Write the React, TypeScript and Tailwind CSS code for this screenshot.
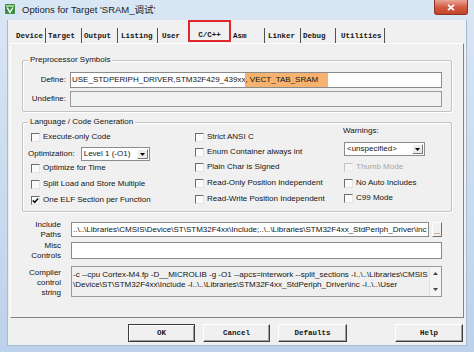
import type { ReactNode } from 'react';

const ui = "font-['Liberation_Sans',Arial,sans-serif] text-[8px] leading-[10px] text-[#141414]";
const dlg = "font-['Liberation_Mono','Courier_New',monospace] text-[7.5px] font-bold leading-[10px] text-[#141414]";

function Check({ checked = false, disabled = false }: { checked?: boolean; disabled?: boolean }) {
  return (
    <span
      className={
        disabled
          ? 'flex h-[9px] w-[9px] shrink-0 border border-t-[#c4c4c4] border-l-[#c4c4c4] border-r-[#ececec] border-b-[#ececec] bg-[#f4f4f4]'
          : 'flex h-[9px] w-[9px] shrink-0 items-center justify-center border border-t-[#6e6e6e] border-l-[#6e6e6e] border-r-[#e4e4e4] border-b-[#e4e4e4] bg-[#fbfbfb]'
      }
    >
      {checked && (
        <svg width="7" height="7" viewBox="0 0 7 7">
          <path d="M0.8 3.4 L2.7 5.3 L6.2 1.4" fill="none" stroke="#111" strokeWidth="1.5" />
        </svg>
      )}
    </span>
  );
}

function Option({
  label,
  checked,
  disabled,
  className = '',
}: {
  label: string;
  checked?: boolean;
  disabled?: boolean;
  className?: string;
}) {
  return (
    <div className={`flex h-[14px] items-center gap-[3px] ${className}`}>
      <Check checked={checked} disabled={disabled} />
      <span className={disabled ? 'text-[#a6a6a6]' : ''}>{label}</span>
    </div>
  );
}

function Dropdown({ value, className = '' }: { value: string; className?: string }) {
  return (
    <div className={`flex h-[14px] items-stretch border border-[#8c8c8c] bg-white ${className}`}>
      <span className="flex flex-1 items-center pl-[2px]">{value}</span>
      <span className="m-[1px] flex w-[11px] items-center justify-center border border-t-white border-l-white border-r-[#7a7a7a] border-b-[#7a7a7a] bg-[#ececec]">
        <svg width="5" height="3" viewBox="0 0 5 3">
          <path d="M0 0H5L2.5 3Z" fill="#000" />
        </svg>
      </span>
    </div>
  );
}

function Group({ title, className = '', children }: { title: string; className?: string; children: ReactNode }) {
  return (
    <div className={`relative rounded-[2px] border border-[#c3c3c3] shadow-[inset_1px_1px_0_#fff,1px_1px_0_#fff] ${className}`}>
      <span className="absolute left-[5px] top-[-6px] bg-[#f0f0f0] px-[2px]">{title}</span>
      {children}
    </div>
  );
}

function Btn({ children, className = '', main = false }: { children: ReactNode; className?: string; main?: boolean }) {
  return (
    <div
      className={`flex h-[18px] items-center justify-center bg-[#f0f0f0] ${dlg} ${
        main
          ? 'border border-[#3c3c3c] shadow-[inset_1px_1px_0_#fff,inset_-1px_-1px_0_#9a9a9a]'
          : 'border border-t-white border-l-white border-r-[#404040] border-b-[#404040] shadow-[inset_-1px_-1px_0_#a0a0a0]'
      } ${className}`}
    >
      {children}
    </div>
  );
}

const tabs = [
  { label: 'Device', cls: 'w-[34px] pl-[4px] border-r' },
  { label: 'Target', cls: 'w-[36px] pl-[2px] border-r' },
  { label: 'Output', cls: 'w-[36px] pl-[2px] border-r' },
  { label: 'Listing', cls: 'w-[40px] pl-[3px] border-r' },
  { label: 'User', cls: 'w-[30px] pl-[4px]' },
];
const tabsAfter = [
  { label: 'Asm', cls: 'w-[34px] pl-[2px] border-r' },
  { label: 'Linker', cls: 'w-[36px] pl-[3px] border-r' },
  { label: 'Debug', cls: 'w-[35px] pl-[2px] border-r' },
  { label: 'Utilities', cls: 'w-[49px] pl-[5px] border-r' },
];

export default function App() {
  return (
    <div className="flex h-[352px] w-[474px] flex-col overflow-hidden bg-linear-to-b from-[#d9e6f4] to-[#bcd2ea] pb-[6px]">
      {/* title bar */}
      <div className="flex h-[20px] shrink-0 items-start">
        <svg className="ml-[5px] mt-[4px]" width="10" height="10" viewBox="0 0 10 10">
          <rect x="0" y="0" width="10" height="10" rx="1" fill="#3b8d3f" />
          <rect x="1" y="1" width="8" height="2" fill="#9fd09a" />
          <path d="M2.2 3.6 L5 8.4 L7.8 3.6" fill="none" stroke="#fff" strokeWidth="1.4" />
        </svg>
        <span className="ml-[7px] mt-[4px] font-['Liberation_Sans','Noto_Sans_CJK_SC',sans-serif] text-[9.5px] leading-[12px] text-[#1c1c1c]">
          Options for Target 'SRAM_调试'
        </span>
        <div className="ml-auto mr-[6px] flex h-[15px] w-[34px] items-center justify-center rounded-b-[3px] border border-t-0 border-[#8e3324] bg-linear-to-b from-[#e8a595] via-[#d35b43] to-[#c2442b]">
          <svg width="8" height="7" viewBox="0 0 8 7">
            <path d="M1 0.8 L7 6.2 M7 0.8 L1 6.2" stroke="#fff" strokeWidth="1.8" />
          </svg>
        </div>
      </div>

      {/* client */}
      <div className={`mx-[7px] flex flex-1 flex-col border-x border-b border-[#a6bad3] bg-[#f0f0f0] ${ui}`}>
        {/* tabs */}
        <div className="flex h-[23px] shrink-0 pl-[4px]">
          {tabs.map((t) => (
            <div key={t.label} className={`flex h-[15px] items-center self-end border-[#505050] ${dlg} ${t.cls}`}>
              {t.label}
            </div>
          ))}
          <div className={`flex h-[22px] w-[43px] items-center justify-center border-2 border-[#e0282c] pt-[7px] ${dlg}`}>
            C/C++
          </div>
          {tabsAfter.map((t) => (
            <div key={t.label} className={`flex h-[15px] items-center self-end border-[#505050] ${dlg} ${t.cls}`}>
              {t.label}
            </div>
          ))}
        </div>

        {/* panel */}
        <div className="mx-[2px] flex h-[275px] shrink-0 flex-col border border-t-white border-l-white border-r-[#838383] border-b-[#838383]">
          <Group title="Preprocessor Symbols" className="ml-[11px] mt-[16px] w-[430px] pb-[4px] pt-[11px]">
            <div className="flex h-[16px] pr-[9px]">
              <span className="flex w-[43px] items-center justify-end">Define:</span>
              <div className="ml-[4px] flex flex-1 items-stretch overflow-hidden whitespace-nowrap border border-[#8a8a8a] bg-white pl-[1px]">
                <span className="flex items-center">USE_STDPERIPH_DRIVER,STM32F429_439xx</span>
                <span className="flex items-center bg-[#f6b36f] pr-[10px]">, VECT_TAB_SRAM</span>
              </div>
            </div>
            <div className="mt-[3px] flex h-[16px] pr-[9px]">
              <span className="flex w-[43px] items-center justify-end">Undefine:</span>
              <div className="ml-[4px] flex-1 border border-[#9a9a9a] bg-[#f2f2f2]" />
            </div>
          </Group>

          <Group title="Language / Code Generation" className="ml-[11px] mt-[10px] flex h-[90px] w-[430px]">
            <div className="flex w-[172px] flex-col pl-[5px] pt-[7px]">
              <Option label="Execute-only Code" className="pl-[3px]" />
              <div className="mt-[3px] flex h-[14px] items-center">
                <span>Optimization:</span>
                <Dropdown value="Level 1 (-O1)" className="ml-[6px] w-[69px]" />
              </div>
              <Option label="Optimize for Time" className="pl-[3px]" />
              <Option label="Split Load and Store Multiple" className="mt-[2px] pl-[3px]" />
              <Option label="One ELF Section per Function" checked className="mt-[2px] pl-[3px]" />
            </div>
            <div className="flex w-[148px] flex-col pt-[7px]">
              <Option label="Strict ANSI C" />
              <Option label="Enum Container always int" className="mt-[1px]" />
              <Option label="Plain Char is Signed" className="mt-[1px]" />
              <Option label="Read-Only Position Independent" className="mt-[2px]" />
              <Option label="Read-Write Position Independent" className="mt-[2px]" />
            </div>
            <div className="flex flex-1 flex-col pt-[2px]">
              <span className="flex h-[12px] items-center">Warnings:</span>
              <Dropdown value="<unspecified>" className="ml-[1px] mt-[5px] w-[81px]" />
              <Option label="Thumb Mode" disabled className="ml-[1px] mt-[4px]" />
              <Option label="No Auto Includes" className="ml-[1px] mt-[2px]" />
              <Option label="C99 Mode" className="ml-[1px] mt-[1px]" />
            </div>
          </Group>

          <div className="mt-[8px] flex pr-[21px]">
            <div className="w-[50px] text-right">
              Include
              <br />
              Paths
            </div>
            <div className="ml-[10px] mt-[2px] flex h-[15px] flex-1 gap-[3px]">
              <div className="flex flex-1 items-center overflow-hidden whitespace-nowrap border border-[#8a8a8a] bg-white pl-[1px]">
                ..\..\Libraries\CMSIS\Device\ST\STM32F4xx\Include;..\..\Libraries\STM32F4xx_StdPeriph_Driver\inc
              </div>
              <div className="flex w-[10px] items-end justify-center border border-t-white border-l-white border-r-[#707070] border-b-[#707070] bg-[#f0f0f0] text-[7px] leading-[9px]">
                ...
              </div>
            </div>
          </div>

          <div className="mt-[1px] flex pr-[21px]">
            <div className="w-[50px] text-right">
              Misc
              <br />
              Controls
            </div>
            <div className="ml-[10px] mt-[1px] h-[17px] flex-1 border border-[#8a8a8a] bg-white" />
          </div>

          <div className="mt-[5px] flex pr-[21px]">
            <div className="mt-[2px] w-[50px] text-right">
              Compiler
              <br />
              control
              <br />
              string
            </div>
            <div className="ml-[10px] flex h-[31px] flex-1 border border-[#9a9a9a] bg-[#f0f0f0]">
              <div className="flex-1 overflow-hidden whitespace-nowrap pl-[1px] pt-[3px]">
                <div>-c --cpu Cortex-M4.fp -D__MICROLIB -g -O1 --apcs=interwork --split_sections -I..\..\Libraries\CMSIS</div>
                <div>\Device\ST\STM32F4xx\Include -I..\..\Libraries\STM32F4xx_StdPeriph_Driver\inc -I..\..\User</div>
              </div>
              <div className="flex w-[12px] flex-col items-center justify-between border-l border-[#e2e2e2] bg-[#f4f4f4] py-[5px]">
                <svg width="5" height="3" viewBox="0 0 5 3">
                  <path d="M0 3H5L2.5 0Z" fill="#444" />
                </svg>
                <svg width="5" height="3" viewBox="0 0 5 3">
                  <path d="M0 0H5L2.5 3Z" fill="#444" />
                </svg>
              </div>
            </div>
          </div>
        </div>

        {/* buttons */}
        <div className="mt-[6px] flex pl-[120px]">
          <Btn main className="w-[67px]">OK</Btn>
          <Btn className="ml-[8px] w-[67px]">Cancel</Btn>
          <Btn className="ml-[8px] w-[69px]">Defaults</Btn>
          <Btn className="ml-[48px] w-[68px]">Help</Btn>
        </div>
      </div>
    </div>
  );
}
